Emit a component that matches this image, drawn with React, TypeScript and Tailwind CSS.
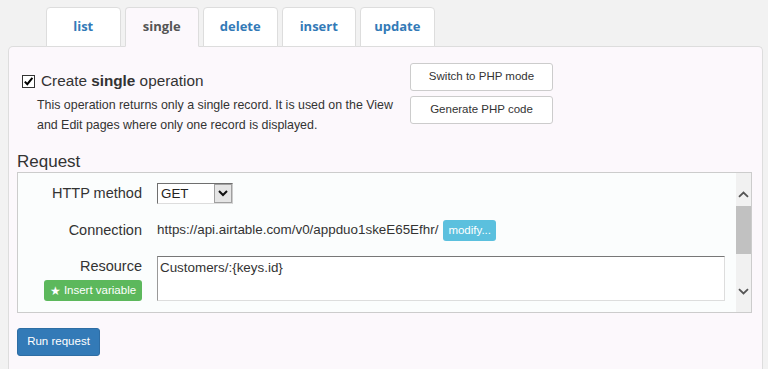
import React from 'react';

const tabs = ['list', 'single', 'delete', 'insert', 'update'];

function Chevron({ up = false }: { up?: boolean }) {
  return (
    <svg width="11" height="7" viewBox="0 0 11 7" className={up ? 'rotate-180' : ''}>
      <path d="M1 1.2 L5.5 5.5 L10 1.2" fill="none" stroke="#555" strokeWidth="1.8" />
    </svg>
  );
}

function CheckBox() {
  return (
    <span className="flex h-[13px] w-[13px] items-center justify-center border border-[#333] bg-white">
      <svg width="11" height="11" viewBox="0 0 11 11">
        <path d="M1.8 5.6 L4.3 8.2 L9.4 1.8" fill="none" stroke="#000" strokeWidth="2" />
      </svg>
    </span>
  );
}

export default function App() {
  return (
    <div className="min-h-screen bg-[#f2f2f2] pl-[8px] pr-[5px] pt-[7px] font-['Liberation_Sans',Arial,sans-serif] text-[#333]">
      {/* tabs */}
      <div className="relative z-10 -mb-px flex gap-[4px] pl-[38px]">
        {tabs.map((t) => {
          const active = t === 'single';
          return (
            <div
              key={t}
              className={`flex h-[40px] w-[74.5px] items-center justify-center rounded-t-[4px] border pb-[1px] font-['Open_Sans',sans-serif] text-[13px] font-bold ${
                active
                  ? 'border-[#ddd] border-b-[#fcf8fc] bg-[#fcf8fc] text-[#555]'
                  : 'border-[#ddd] bg-white text-[#337ab7]'
              }`}
            >
              {t}
            </div>
          );
        })}
      </div>

      {/* panel */}
      <div className="min-h-[330px] rounded-t-[5px] border border-b-0 border-[#ddd] bg-[#fcf8fc] pl-[8px] pr-[10px] pt-[16px]">
        <div className="flex pl-[5px]">
          <div className="w-[388px] pt-[8px]">
            <div className="flex items-center gap-[6px] text-[15.3px] leading-[20px]">
              <CheckBox />
              <span>
                Create <b>single</b> operation
              </span>
            </div>
            <p className="mt-[4px] pl-[15px] text-[12.4px] leading-[20px]">
              This operation returns only a single record. It is used on the View
              <br />
              and Edit pages where only one record is displayed.
            </p>
          </div>
          <div className="flex w-[143px] flex-col gap-[5px]">
            <button className="h-[28px] rounded-[3px] border border-[#ccc] bg-white text-[11.5px] text-[#333]">
              Switch to PHP mode
            </button>
            <button className="h-[28px] rounded-[3px] border border-[#ccc] bg-white text-[11.5px] text-[#333]">
              Generate PHP code
            </button>
          </div>
        </div>

        <h3 className="mt-[17px] text-[17px] leading-[20px]">Request</h3>

        <div className="flex h-[141px] border border-[#ccc] bg-[#fbfdfd]">
          <div className="grid flex-1 grid-cols-[124px_1fr] content-start gap-x-[15px] pt-[10px] pr-[11px] text-[14.5px]">
            {/* http method */}
            <div className="flex h-[21px] items-center justify-end">HTTP method</div>
            <div className="flex h-[21px] items-center">
              <div className="flex h-[21px] w-[76px] border border-[#6f6f6f] border-r-[#ccc] border-b-[#ddd] bg-white">
                <span className="flex-1 pl-[3px] text-[13.4px] leading-[19px] text-[#222]">GET</span>
                <span className="flex w-[18px] items-center justify-center border border-[#a0a0a0] bg-[#e5e5e5]">
                  <svg width="10" height="7" viewBox="0 0 10 7">
                    <path d="M1 1 L5 5 L9 1" fill="none" stroke="#111" strokeWidth="2" />
                  </svg>
                </span>
              </div>
            </div>

            {/* connection */}
            <div className="mt-[16px] flex h-[21px] items-center justify-end">Connection</div>
            <div className="mt-[16px] flex h-[21px] items-center gap-[5px]">
              <span className="text-[13.4px]">https://api.airtable.com/v0/appduo1skeE65Efhr/</span>
              <span className="flex h-[21px] items-center rounded-[3px] bg-[#5bc0de] px-[5px] text-[11.5px] text-white">
                modify...
              </span>
            </div>

            {/* resource */}
            <div className="mt-[15px] flex flex-col items-end">
              <span className="leading-[20px]">Resource</span>
              <span className="mt-[4px] flex h-[21px] w-[98px] items-center justify-center gap-[3px] rounded-[3px] bg-[#5cb85c] text-[11.5px] text-white">
                <span className="text-[12px]">★</span> Insert variable
              </span>
            </div>
            <div className="mt-[15px] h-[45px] border border-[#ddd] border-t-[#777] border-l-[#999] bg-white px-[2px] pt-[1px] text-[13.4px] leading-[20px]">
              Customers/:{'{keys.id}'}
            </div>
          </div>

          {/* scrollbar */}
          <div className="flex w-[15px] flex-col bg-[#f1f1f1]">
            <div className="flex h-[33px] items-end justify-center pb-[8px]">
              <Chevron up />
            </div>
            <div className="h-[48px] bg-[#c1c1c1]" />
            <div className="flex-1" />
            <div className="flex h-[34px] items-start justify-center pt-[10px]">
              <Chevron />
            </div>
          </div>
        </div>

        <button className="mt-[15px] h-[28px] w-[83px] rounded-[3px] border border-[#2e6da4] bg-[#337ab7] text-[11.5px] text-white">
          Run request
        </button>
      </div>
    </div>
  );
}
